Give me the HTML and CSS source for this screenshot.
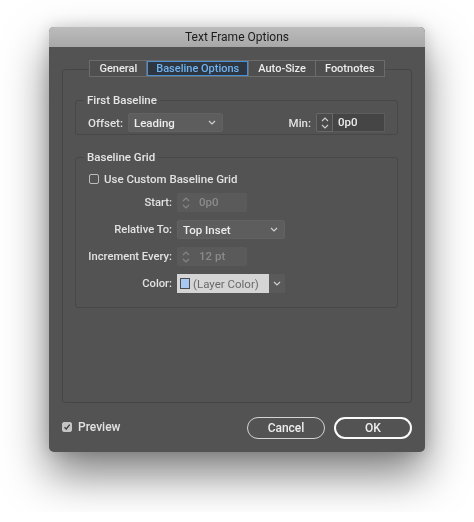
FILE: index.html
```html
<!DOCTYPE html>
<html lang="en">
<head>
    <meta charset="UTF-8">
    <meta name="viewport" content="width=device-width, initial-scale=1.0">
    <title>Text Frame Options</title>
    <link rel="stylesheet" href="styles.css">
</head>
<body>
    <div class="dialog">
        <div class="titlebar">Text Frame Options</div>
        <div class="panel">
            <div class="tabs">
                <span class="tab">General</span>
                <span class="tab active">Baseline Options</span>
                <span class="tab">Auto-Size</span>
                <span class="tab">Footnotes</span>
            </div>

            <fieldset class="group first">
                <legend>First Baseline</legend>
                <div class="row">
                    <div class="pair">
                        <span class="label">Offset:</span>
                        <div class="select offset">
                            <span>Leading</span>
                            <svg width="8" height="5" viewBox="0 0 8 5"><path d="M1 1l3 3 3-3" fill="none" stroke="#d0d0d0" stroke-width="1.2"/></svg>
                        </div>
                    </div>
                    <div class="pair">
                        <span class="label">Min:</span>
                        <div class="spin min">
                            <span class="arrows">
                                <svg width="8" height="14" viewBox="0 0 8 14"><path d="M1 5l3-3 3 3M1 9l3 3 3-3" fill="none" stroke="#d0d0d0" stroke-width="1.1"/></svg>
                            </span>
                            <span class="value">0p0</span>
                        </div>
                    </div>
                </div>
            </fieldset>

            <fieldset class="group grid">
                <legend>Baseline Grid</legend>
                <label class="check">
                    <span class="box"></span>
                    Use Custom Baseline Grid
                </label>
                <div class="form">
                    <div class="field-row">
                        <span class="label">Start:</span>
                        <div class="spin disabled">
                            <span class="arrows">
                                <svg width="8" height="14" viewBox="0 0 8 14"><path d="M1 5l3-3 3 3M1 9l3 3 3-3" fill="none" stroke="#878787" stroke-width="1.1"/></svg>
                            </span>
                            <span class="value">0p0</span>
                        </div>
                    </div>
                    <div class="field-row">
                        <span class="label">Relative To:</span>
                        <div class="select relative">
                            <span>Top Inset</span>
                            <svg width="8" height="5" viewBox="0 0 8 5"><path d="M1 1l3 3 3-3" fill="none" stroke="#d0d0d0" stroke-width="1.2"/></svg>
                        </div>
                    </div>
                    <div class="field-row">
                        <span class="label">Increment Every:</span>
                        <div class="spin disabled">
                            <span class="arrows">
                                <svg width="8" height="14" viewBox="0 0 8 14"><path d="M1 5l3-3 3 3M1 9l3 3 3-3" fill="none" stroke="#878787" stroke-width="1.1"/></svg>
                            </span>
                            <span class="value">12 pt</span>
                        </div>
                    </div>
                    <div class="field-row">
                        <span class="label">Color:</span>
                        <div class="color-field">
                            <span class="color-name"><span class="swatch"></span>(Layer Color)</span>
                            <span class="drop">
                                <svg width="8" height="5" viewBox="0 0 8 5"><path d="M1 1l3 3 3-3" fill="none" stroke="#d0d0d0" stroke-width="1.2"/></svg>
                            </span>
                        </div>
                    </div>
                </div>
            </fieldset>
        </div>

        <div class="footer">
            <label class="check preview">
                <span class="box checked">
                    <svg width="8" height="8" viewBox="0 0 8 8"><path d="M1.5 4.2l1.8 1.8 3.4-4.4" fill="none" stroke="#3c3c3c" stroke-width="1.3"/></svg>
                </span>
                Preview
            </label>
            <div class="buttons">
                <button type="button">Cancel</button>
                <button type="button" class="ok">OK</button>
            </div>
        </div>
    </div>
</body>
</html>
```

FILE: styles.css
```css
html {
    background: #fff;
}
body {
    margin: 0;
    padding: 27px 0 60px;
    font-family: Roboto, "Liberation Sans", Arial, sans-serif;
    font-size: 11.5px;
    font-weight: 500;
}
.dialog {
    width: 376px;
    height: 425px;
    margin: 0 auto;
    background: #535353;
    color: #e2e2e2;
    border-radius: 5px;
    filter: drop-shadow(0 0 8px rgba(0, 0, 0, 0.15)) drop-shadow(0 22px 22px rgba(0, 0, 0, 0.5));
    display: flex;
    flex-direction: column;
}
.titlebar {
    height: 20px;
    line-height: 20px;
    text-align: center;
    font-size: 12px;
    font-weight: 400;
    color: #1c1c1c;
    background: linear-gradient(#bcbcbc, #a8a8a8);
    border-radius: 5px 5px 0 0;
}
.panel {
    margin: 22px 13px 0;
    height: 334px;
    box-sizing: border-box;
    border: 1px solid #464646;
    border-radius: 3px;
}

/* tab strip sits on the panel's top edge */
.tabs {
    display: flex;
    width: max-content;
    margin: -10px auto 0;
    border: 1px solid #6c6c6c;
    background: #4f4f4f;
    font-size: 11px;
}
.tab {
    height: 15px;
    line-height: 15px;
    padding: 0 9px;
    color: #ececec;
    border-left: 1px solid #6c6c6c;
}
.tab:first-child {
    border-left: none;
}
.tab.active {
    background: #2e3741;
    color: #70b3f0;
    box-shadow: inset 0 0 0 1px #4b8fd4;
}

.group {
    margin: 0 13px 0 12px;
    padding: 0 12px;
    border: 1px solid #474747;
    border-radius: 3px;
    min-width: 0;
}
.group legend {
    padding: 0 3px;
    margin-left: -4px;
    line-height: 14px;
    color: #e6e6e6;
}
.group.first {
    margin-top: 16px;
    padding-top: 6px;
    padding-bottom: 2px;
}
.group.grid {
    margin-top: 15px;
    padding-top: 8px;
    padding-bottom: 14px;
}

.row {
    display: flex;
    align-items: center;
    justify-content: space-between;
    height: 19px;
}
.pair {
    display: flex;
    align-items: center;
    gap: 5px;
}

.select {
    display: flex;
    align-items: center;
    justify-content: space-between;
    height: 19px;
    box-sizing: border-box;
    padding: 0 6px 0 5px;
    background: #5d5d5d;
    border: 1px solid #626262;
    border-radius: 2px;
    color: #ececec;
}
.select.offset {
    width: 95px;
}
.select.relative {
    width: 108px;
}

.spin {
    display: flex;
    height: 19px;
    box-sizing: border-box;
}
.spin .arrows {
    width: 17px;
    display: flex;
    align-items: center;
    justify-content: center;
    box-sizing: border-box;
}
.spin .value {
    flex: 1;
    line-height: 19px;
    padding-left: 5px;
}
.spin.min {
    width: 69px;
}
.spin.min .arrows {
    background: #4b4b4b;
    border: 1px solid #686868;
    border-radius: 2px 0 0 2px;
}
.spin.min .value {
    background: #454545;
    border: 1px solid #5c5c5c;
    border-left: none;
    line-height: 17px;
    color: #ececec;
}
.spin.disabled {
    width: 70px;
    background: #5a5a5a;
    border-radius: 2px;
    color: #8b8b8b;
}

.check {
    display: flex;
    align-items: center;
    gap: 5px;
    height: 14px;
    margin-left: 1px;
}
.box {
    width: 10px;
    height: 10px;
    box-sizing: border-box;
    border: 1px solid #bdbdbd;
    border-radius: 2px;
    display: flex;
    align-items: center;
    justify-content: center;
}
.box.checked {
    background: #c4c4c4;
    border-color: #c4c4c4;
}

.form {
    display: flex;
    flex-direction: column;
    gap: 8px;
    margin-top: 7px;
}
.field-row {
    display: flex;
    align-items: center;
    gap: 5px;
    height: 19px;
}
.field-row .label {
    flex: 0 0 84px;
    text-align: right;
    white-space: nowrap;
    font-size: 11.2px;
}

.color-field {
    display: flex;
    width: 108px;
    height: 19px;
}
.color-name {
    width: 92px;
    display: flex;
    align-items: center;
    gap: 3px;
    padding-left: 3px;
    box-sizing: border-box;
    background: #d5d5d5;
    color: #6a6a6a;
    font-weight: 400;
}
.swatch {
    width: 10px;
    height: 11px;
    box-sizing: border-box;
    background: #a9c9f3;
    border: 1px solid #4d4d4d;
}
.drop {
    flex: 1;
    display: flex;
    align-items: center;
    justify-content: center;
    background: #5a5a5a;
}

.footer {
    display: flex;
    align-items: center;
    justify-content: space-between;
    padding: 14px 13px 0;
}
.preview {
    margin: -3px 0 0;
    gap: 6px;
    font-size: 12px;
}
.buttons {
    display: flex;
    gap: 9px;
}
button {
    width: 78px;
    height: 22px;
    border-radius: 11px;
    border: 1.5px solid #d4d4d4;
    background: transparent;
    color: #eeeeee;
    font-family: inherit;
    font-size: 12px;
    font-weight: 500;
}
button.ok {
    border: 2px solid #fafafa;
}
```
